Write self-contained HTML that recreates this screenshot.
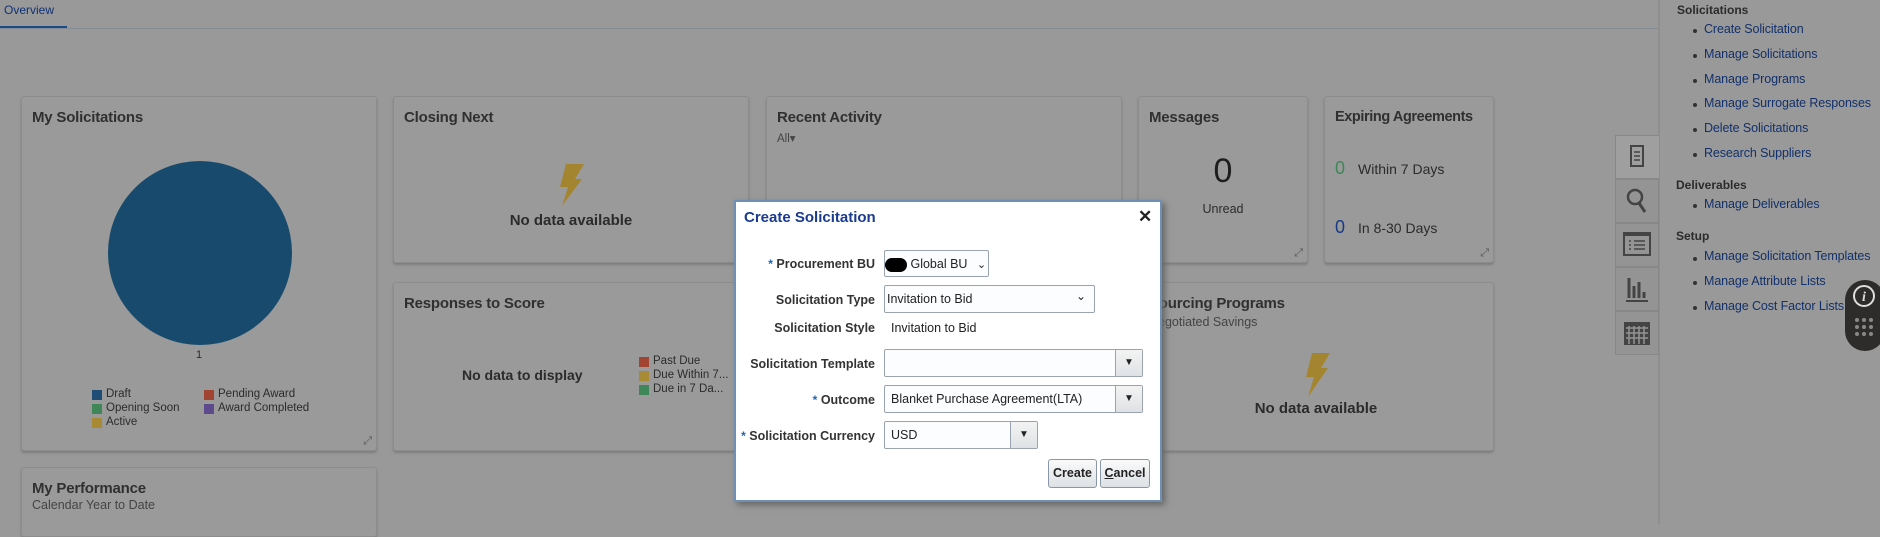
<!DOCTYPE html>
<html><head><meta charset="utf-8"><style>
*{box-sizing:border-box;margin:0;padding:0}
body{width:1880px;height:524px;overflow:hidden;background:#999;font-family:"Liberation Sans",sans-serif;position:relative;color:#2b2b2b}
.a{position:absolute;white-space:nowrap}
.card{position:absolute;border:1px solid #8c8c8c;border-radius:3px;box-shadow:0 2px 2px #7e7e7e;background:#9a9a9a}
.ct{position:absolute;left:10px;top:12px;font-size:15px;font-weight:bold;color:#303030;letter-spacing:-0.2px}
.lnk{font-size:12.5px;color:#12306a;letter-spacing:-0.1px}
.bul{position:absolute;width:4px;height:4px;border-radius:50%;background:#333}
.sq{position:absolute;width:10px;height:10px}
.lg{font-size:11.5px;color:#2b2b2b}
.dlg{position:absolute;left:734px;top:200px;width:428px;height:302px;background:#fff;border:2px solid #6f8fb5;box-shadow:3px 3px 6px #666}
.lbl{position:absolute;right:285px;font-size:12.5px;font-weight:bold;color:#333;text-align:right}
.st{color:#1e63b5;font-size:12px;vertical-align:top}
.fld{position:absolute;left:148px;border:1px solid #9aa4b0;border-radius:2px;background:#fbfdff;font-size:12.5px;color:#222;padding-left:4px;line-height:26px}
.btn{position:absolute;right:0;top:0;bottom:0;width:27px;border-left:1px solid #9aa4b0;background:linear-gradient(#f3f3f3,#dfe2e5);font-size:10px;text-align:center;line-height:26px}
.pb{position:absolute;border:1px solid #8a97a6;border-radius:3px;background:linear-gradient(#fafafa,#dde1e5);font-size:12.5px;font-weight:bold;text-align:center;line-height:27px;color:#222}
.tab{position:absolute;left:1615px;width:44px;height:44px;border:1px solid #888;background:#949494}
</style></head><body>
<div class="a" style="left:4px;top:3px;font-size:12px;color:#0f3275">Overview</div>
<div class="a" style="left:0;top:26px;width:67px;height:3px;background:#1a4a8a"></div>
<div class="a" style="left:0;top:28px;width:1658px;height:1px;background:#858b92"></div>
<div class="a" style="left:1658px;top:0;width:2px;height:524px;background:#8e8e8e"></div>

<div class="card" style="left:21px;top:96px;width:356px;height:355px"><div class="ct">My Solicitations</div>
<svg class="a" style="left:85px;top:62px" width="186" height="188"><circle cx="93" cy="94" r="92" fill="#174a6c"/></svg>
<div class="a" style="left:174px;top:252px;font-size:11px">1</div>
<div class="sq" style="left:70px;top:293px;background:#1e4e75"></div><div class="a lg" style="left:84px;top:291px">Draft</div>
<div class="sq" style="left:70px;top:307px;background:#3f8658"></div><div class="a lg" style="left:84px;top:305px">Opening Soon</div>
<div class="sq" style="left:70px;top:321px;background:#a88a35"></div><div class="a lg" style="left:84px;top:319px">Active</div>
<div class="sq" style="left:182px;top:293px;background:#a24432"></div><div class="a lg" style="left:196px;top:291px">Pending Award</div>
<div class="sq" style="left:182px;top:307px;background:#5c4a8d"></div><div class="a lg" style="left:196px;top:305px">Award Completed</div>
<div class="a" style="right:4px;bottom:2px;font-size:11px;color:#555">⤢</div></div>

<div class="card" style="left:393px;top:96px;width:356px;height:167px"><div class="ct">Closing Next</div>
<svg class="a" style="left:162px;top:67px" width="30" height="42"><path d="M10 0h18l-9 15h7L6 42l6-19H4z" fill="#a4852f"/></svg>
<div class="a" style="left:0;width:354px;text-align:center;top:115px;font-size:15px;font-weight:bold;color:#2b2b2b">No data available</div></div>

<div class="card" style="left:766px;top:96px;width:356px;height:167px"><div class="ct">Recent Activity</div>
<div class="a" style="left:10px;top:34px;font-size:11.5px;color:#444">All▾</div></div>

<div class="card" style="left:1138px;top:96px;width:170px;height:167px"><div class="ct">Messages</div>
<div class="a" style="left:0;width:168px;text-align:center;top:55px;font-size:34px;color:#1e1e1e">0</div>
<div class="a" style="left:0;width:168px;text-align:center;top:105px;font-size:12.5px">Unread</div>
<div class="a" style="right:4px;bottom:2px;font-size:11px;color:#555">⤢</div></div>

<div class="card" style="left:1324px;top:96px;width:170px;height:167px"><div class="ct" style="font-size:14.5px;letter-spacing:-0.4px">Expiring Agreements</div>
<div class="a" style="left:10px;top:61px;font-size:18px;color:#3f8658">0</div><div class="a" style="left:33px;top:64px;font-size:14px">Within 7 Days</div>
<div class="a" style="left:10px;top:120px;font-size:18px;color:#173a85">0</div><div class="a" style="left:33px;top:123px;font-size:14px">In 8-30 Days</div>
<div class="a" style="right:4px;bottom:2px;font-size:11px;color:#555">⤢</div></div>

<div class="card" style="left:393px;top:282px;width:420px;height:169px"><div class="ct">Responses to Score</div>
<div class="a" style="left:68px;top:84px;font-size:14px;font-weight:bold">No data to display</div>
<div class="sq" style="left:245px;top:74px;background:#a24432"></div><div class="a lg" style="left:259px;top:72px">Past Due</div>
<div class="sq" style="left:245px;top:88px;background:#a88a35"></div><div class="a lg" style="left:259px;top:86px">Due Within 7...</div>
<div class="sq" style="left:245px;top:102px;background:#3f8658"></div><div class="a lg" style="left:259px;top:100px">Due in 7 Da...</div></div>

<div class="card" style="left:1138px;top:282px;width:356px;height:169px"><div class="ct">Sourcing Programs</div>
<div class="a" style="left:10px;top:32px;font-size:12.5px;color:#444">Negotiated Savings</div>
<svg class="a" style="left:163px;top:70px" width="30" height="44"><path d="M10 0h18l-9 15h7L6 44l6-20H4z" fill="#a4852f"/></svg>
<div class="a" style="left:0;width:354px;text-align:center;top:117px;font-size:15px;font-weight:bold">No data available</div></div>

<div class="card" style="left:21px;top:467px;width:356px;height:70px"><div class="ct">My Performance</div>
<div class="a" style="left:10px;top:30px;font-size:12.5px;color:#444">Calendar Year to Date</div></div>

<div class="tab" style="top:135px;background:#9f9f9f;border-right:none"><svg width="42" height="42"><rect x="15" y="10" width="12" height="20" fill="none" stroke="#444" stroke-width="2"/><path d="M18 16h6M18 20h6M18 24h6" stroke="#444" stroke-width="1.5"/></svg></div>
<div class="tab" style="top:179px"><svg width="42" height="42"><circle cx="19" cy="17" r="7" fill="none" stroke="#444" stroke-width="2.5"/><path d="M23 23l6 9" stroke="#444" stroke-width="3"/></svg></div>
<div class="tab" style="top:223px"><svg width="42" height="42"><rect x="8" y="9" width="26" height="22" fill="none" stroke="#444" stroke-width="2"/><path d="M8 10h26" stroke="#444" stroke-width="4"/><path d="M13 17h2M18 17h11M13 21h2M18 21h11M13 25h2M18 25h11" stroke="#444" stroke-width="1.5"/></svg></div>
<div class="tab" style="top:267px"><svg width="42" height="42"><path d="M10 33h22" stroke="#444" stroke-width="2"/><path d="M13 30V10M18 30V18M23 30V14M28 30V24" stroke="#444" stroke-width="3"/></svg></div>
<div class="tab" style="top:311px"><svg width="42" height="42"><rect x="8" y="10" width="26" height="23" fill="#444"/><path d="M10 16h22M10 21h22M10 26h22M13 14v18M18 14v18M23 14v18M28 14v18" stroke="#949494" stroke-width="1.5"/></svg></div>

<div class="a" style="left:1677px;top:3px;font-size:12px;font-weight:bold;color:#2b2b2b">Solicitations</div>
<div class="bul" style="left:1693px;top:29px"></div><div class="a lnk" style="left:1704px;top:22px">Create Solicitation</div>
<div class="bul" style="left:1693px;top:54px"></div><div class="a lnk" style="left:1704px;top:47px">Manage Solicitations</div>
<div class="bul" style="left:1693px;top:79px"></div><div class="a lnk" style="left:1704px;top:72px">Manage Programs</div>
<div class="bul" style="left:1693px;top:103px"></div><div class="a lnk" style="left:1704px;top:96px">Manage Surrogate Responses</div>
<div class="bul" style="left:1693px;top:128px"></div><div class="a lnk" style="left:1704px;top:121px">Delete Solicitations</div>
<div class="bul" style="left:1693px;top:153px"></div><div class="a lnk" style="left:1704px;top:146px">Research Suppliers</div>
<div class="a" style="left:1676px;top:178px;font-size:12px;font-weight:bold">Deliverables</div>
<div class="bul" style="left:1693px;top:204px"></div><div class="a lnk" style="left:1704px;top:197px">Manage Deliverables</div>
<div class="a" style="left:1676px;top:229px;font-size:12px;font-weight:bold">Setup</div>
<div class="bul" style="left:1693px;top:257px"></div><div class="a lnk" style="left:1704px;top:249px">Manage Solicitation Templates</div>
<div class="bul" style="left:1693px;top:281px"></div><div class="a lnk" style="left:1704px;top:274px">Manage Attribute Lists</div>
<div class="bul" style="left:1693px;top:306px"></div><div class="a lnk" style="left:1704px;top:299px">Manage Cost Factor Lists</div>
<div class="a" style="left:1845px;top:280px;width:40px;height:71px;border-radius:20px;background:#2e2c2a"><svg width="40" height="71"><circle cx="19" cy="16" r="10" fill="none" stroke="#ddd" stroke-width="2"/><text x="19" y="21" font-family="Liberation Serif" font-style="italic" font-weight="bold" font-size="14" fill="#ddd" text-anchor="middle">i</text><g fill="#888"><circle cx="12" cy="40" r="2"/><circle cx="19" cy="40" r="2"/><circle cx="26" cy="40" r="2"/><circle cx="12" cy="47" r="2"/><circle cx="19" cy="47" r="2"/><circle cx="26" cy="47" r="2"/><circle cx="12" cy="54" r="2"/><circle cx="19" cy="54" r="2"/><circle cx="26" cy="54" r="2"/></g></svg></div>

<div class="dlg">
<div class="a" style="left:8px;top:7px;font-size:15px;font-weight:bold;color:#1a3b8f">Create Solicitation</div>
<div class="a" style="left:402px;top:5px;font-size:17px;font-weight:bold;color:#222">✕</div>
<div class="lbl" style="top:55px"><span class="st">*</span> Procurement BU</div>
<div class="fld" style="top:48px;width:105px;height:27px"><span style="display:inline-block;width:22px;height:14px;border-radius:7px;background:#000;vertical-align:middle;margin-left:-4px"></span> Global BU <span style="font-size:11px;margin-left:6px">⌄</span></div>
<div class="lbl" style="top:91px">Solicitation Type</div>
<div class="fld" style="top:83px;width:211px;height:28px;padding-left:2px">Invitation to Bid<span style="position:absolute;right:8px;top:-3px;font-size:12px">⌄</span></div>
<div class="lbl" style="top:119px">Solicitation Style</div>
<div class="a" style="left:155px;top:119px;font-size:12.5px;color:#222">Invitation to Bid</div>
<div class="lbl" style="top:155px">Solicitation Template</div>
<div class="fld" style="top:147px;width:259px;height:28px"><div class="btn">▼</div></div>
<div class="lbl" style="top:191px"><span class="st">*</span> Outcome</div>
<div class="fld" style="top:183px;width:259px;height:28px;padding-left:6px">Blanket Purchase Agreement(LTA)<div class="btn">▼</div></div>
<div class="lbl" style="top:227px"><span class="st">*</span> Solicitation Currency</div>
<div class="fld" style="top:219px;width:154px;height:28px;padding-left:6px">USD<div class="btn">▼</div></div>
<div class="pb" style="left:312px;top:257px;width:49px;height:29px">Create</div>
<div class="pb" style="left:364px;top:257px;width:50px;height:29px"><u>C</u>ancel</div>
</div>
</body></html>
